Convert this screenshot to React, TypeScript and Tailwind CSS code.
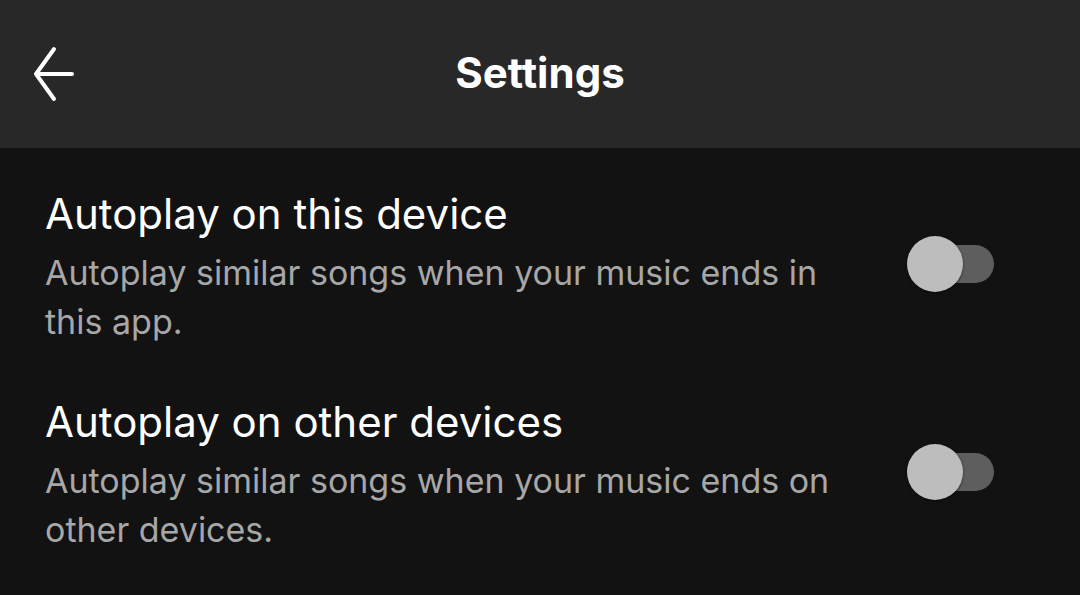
import React from "react";

function Toggle() {
  return (
    <div className="relative w-[87px] h-[56px] flex items-center shrink-0">
      <div className="absolute left-[14px] right-0 h-[38px] rounded-full bg-[#5e5e5e]" />
      <div className="absolute left-0 w-[56px] h-[56px] rounded-full bg-[#bdbdbd] shadow-[0_1px_3px_rgba(0,0,0,0.5)]" />
    </div>
  );
}

function Item({ title, desc }: { title: string; desc: string }) {
  return (
    <div className="flex items-center">
      <div className="w-[820px] shrink-0">
        <div className="text-white text-[42px] leading-[50px]">{title}</div>
        <div className="mt-[9px] text-[#a7a7a7] text-[34px] leading-[49px]">{desc}</div>
      </div>
      <div className="ml-[42px] mb-[7px]">
        <Toggle />
      </div>
    </div>
  );
}

export default function App() {
  return (
    <div
      className="w-[1080px] h-[595px] bg-[#121212] overflow-hidden"
      style={{ fontFamily: "Inter, 'Noto Sans', sans-serif" }}
    >
      <div className="h-[148px] bg-[#282828] grid grid-cols-[1fr_auto_1fr] items-center">
        <div className="pl-[33px] flex items-center">
          <svg width="42" height="56" viewBox="0 0 42 56" fill="none">
            <path d="M21 3 L3 28 L21 53 M3 28 H39" stroke="white" strokeWidth="4" strokeLinecap="round" strokeLinejoin="round" />
          </svg>
        </div>
        <div className="text-white font-bold text-[42px] leading-none pb-[2px]">Settings</div>
        <div />
      </div>
      <div className="pl-[45px] pt-[41px] flex flex-col gap-[51px]">
        <Item title="Autoplay on this device" desc="Autoplay similar songs when your music ends in this app." />
        <Item title="Autoplay on other devices" desc="Autoplay similar songs when your music ends on other devices." />
      </div>
    </div>
  );
}
